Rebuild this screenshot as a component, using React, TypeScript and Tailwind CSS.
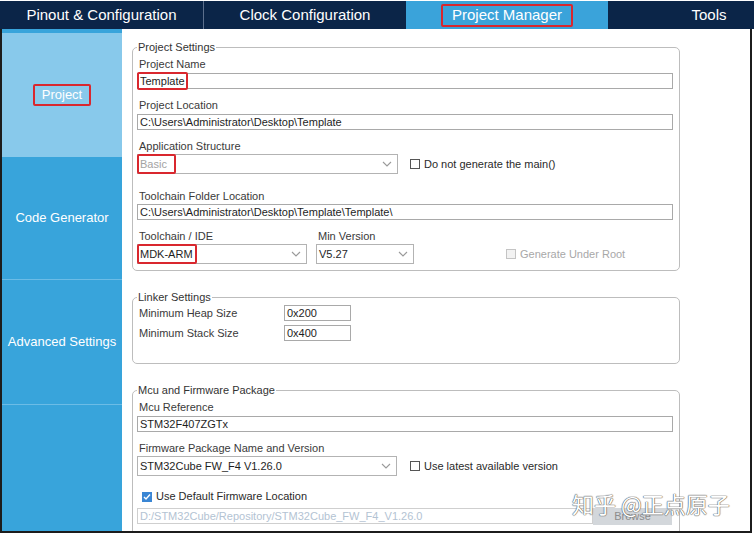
import type { ReactNode } from 'react'
import clsx from 'clsx'

// STM32CubeMX - Project Manager / Project page

function Chevron() {
  return (
    <svg width="10" height="6" viewBox="0 0 10 6" className="ml-auto mr-[5px] shrink-0">
      <polyline points="1,1 5,5 9,1" fill="none" stroke="#9a9a9a" strokeWidth="1.1" />
    </svg>
  )
}

function Label({ children, className }: { children: ReactNode; className?: string }) {
  return (
    <div className={clsx('h-[13px] pl-[2px] text-[11px] leading-[13px] text-[#3a3a3a]', className)}>
      {children}
    </div>
  )
}

function TextBox({ value, className, disabled }: { value: string; className?: string; disabled?: boolean }) {
  return (
    <div
      className={clsx(
        'relative h-[16px] border bg-white pl-[2px] text-[11px] leading-[14px] whitespace-nowrap',
        disabled ? 'border-[#cfcfcf] text-[#b3c3d3]' : 'border-[#a9a9a9] text-[#1e1e1e]',
        className
      )}
    >
      {value}
    </div>
  )
}

function Select({ value, className, muted, mark }: { value: string; className?: string; muted?: boolean; mark?: number }) {
  return (
    <div
      className={clsx(
        'relative flex h-[20px] items-center border border-[#b3b3b3] bg-white pl-[2px] text-[11px]',
        muted ? 'text-[#a3a3a3]' : 'text-[#1e1e1e]',
        className
      )}
    >
      <span>{value}</span>
      <Chevron />
      {mark && (
        <span
          className="absolute -left-px -top-px h-[20px] rounded-[2px] border-2 border-[#d9272e]"
          style={{ width: mark }}
        />
      )}
    </div>
  )
}

function CheckBox({ label, checked, disabled, className }: { label: string; checked?: boolean; disabled?: boolean; className?: string }) {
  return (
    <div className={clsx('flex items-center gap-[4px] text-[11px] leading-[13px]', className)}>
      <span
        className={clsx(
          'flex h-[10px] w-[10px] items-center justify-center border',
          checked ? 'border-[#3a86d4] bg-[#3a86d4]' : disabled ? 'border-[#c4c4c4] bg-[#f2f2f2]' : 'border-[#555] bg-white'
        )}
      >
        {checked && (
          <svg width="8" height="8" viewBox="0 0 8 8">
            <polyline points="1,4 3,6 7,1.5" fill="none" stroke="#fff" strokeWidth="1.4" />
          </svg>
        )}
      </span>
      <span className={disabled ? 'text-[#a8a8a8]' : 'text-[#2a2a2a]'}>{label}</span>
    </div>
  )
}

function Group({ title, children, className }: { title: string; children: ReactNode; className?: string }) {
  return (
    <fieldset className={clsx('w-[548px] rounded-[5px] border border-[#bdbdbd] pl-[4px] pr-[6px]', className)}>
      <legend className="px-[1px] text-[11px] leading-[13px] text-[#333]">{title}</legend>
      {children}
    </fieldset>
  )
}

const tabs = [
  { name: 'Pinout & Configuration', w: 'w-[204px]' },
  { name: 'Clock Configuration', w: 'w-[202px]' },
  { name: 'Project Manager', w: 'w-[202px]', active: true },
  { name: 'Tools', w: 'w-[202px]' },
]

export default function App() {
  return (
    <div className="h-[535px] w-[754px] overflow-hidden bg-white pt-[1px] font-['Liberation_Sans',Arial,sans-serif]">
      {/* Top tabs */}
      <div className="flex h-[28px] overflow-hidden bg-[#0b2548] text-[15px] text-white">
        {tabs.map((t, i) => (
          <div
            key={t.name}
            className={clsx(
              'flex shrink-0 items-center justify-center',
              t.w,
              t.active && 'bg-[#3aa3da]',
              i === 0 && 'border-r border-[#5c6f8c]'
            )}
          >
            {t.active ? (
              <span className="flex h-[23px] items-center rounded-[2px] border-2 border-[#d9272e] px-[9px]">{t.name}</span>
            ) : (
              t.name
            )}
          </div>
        ))}
      </div>

      <div className="flex h-[504px] w-[752px] border-b-2 border-l-2 border-r-2 border-[#1c1c1c]">
        {/* Sidebar */}
        <div className="flex w-[120px] shrink-0 flex-col bg-[#38a4db] text-[13px] text-white">
          <div className="h-[4px]" />
          <div className="flex h-[124px] items-center justify-center bg-[#88c9eb]">
            <span className="rounded-[2px] border-2 border-[#d9272e] px-[7px] py-[2px] leading-[14px]">Project</span>
          </div>
          <div className="flex h-[123px] items-center justify-center border-b border-[#6cbce6]">Code Generator</div>
          <div className="flex h-[125px] items-center justify-center border-b border-[#6cbce6]">Advanced Settings</div>
          <div className="flex-1" />
        </div>

        {/* Main */}
        <div className="flex-1 overflow-hidden bg-white pl-[10px]">
          <Group title="Project Settings" className="mt-[12px] pb-[6px]">
            <Label className="mt-[4px]">Project Name</Label>
            <div className="relative mt-[2px]">
              <TextBox value="Template" />
              <span className="absolute -top-px left-0 h-[18px] w-[51px] rounded-[2px] border-2 border-[#d9272e]" />
            </div>
            <Label className="mt-[10px]">Project Location</Label>
            <TextBox className="mt-[2px]" value="C:\Users\Administrator\Desktop\Template" />
            <Label className="mt-[10px]">Application Structure</Label>
            <div className="mt-[1px] flex items-center">
              <Select className="w-[261px]" value="Basic" muted mark={39} />
              <CheckBox className="ml-[12px]" label="Do not generate the main()" />
            </div>
            <Label className="mt-[16px]">Toolchain Folder Location</Label>
            <TextBox className="mt-[1px]" value="C:\Users\Administrator\Desktop\Template\Template\" />
            <div className="mt-[10px] flex">
              <Label className="w-[179px]">Toolchain / IDE</Label>
              <Label>Min Version</Label>
            </div>
            <div className="mt-[1px] flex items-center">
              <Select className="w-[170px]" value="MDK-ARM" mark={60} />
              <Select className="ml-[9px] w-[98px]" value="V5.27" />
              <CheckBox className="ml-[92px]" label="Generate Under Root" disabled />
            </div>
          </Group>

          <Group title="Linker Settings" className="mt-[20px] pb-[22px]">
            <div className="mt-[1px] flex items-center">
              <Label className="w-[147px]">Minimum Heap Size</Label>
              <TextBox className="w-[67px]" value="0x200" />
            </div>
            <div className="mt-[4px] flex items-center">
              <Label className="w-[147px]">Minimum Stack Size</Label>
              <TextBox className="w-[67px]" value="0x400" />
            </div>
          </Group>

          <Group title="Mcu and Firmware Package" className="mt-[20px] pb-[20px]">
            <Label className="mt-[4px]">Mcu Reference</Label>
            <TextBox className="mt-[2px]" value="STM32F407ZGTx" />
            <Label className="mt-[10px]">Firmware Package Name and Version</Label>
            <div className="mt-[1px] flex items-center">
              <Select className="w-[260px]" value="STM32Cube FW_F4 V1.26.0" />
              <CheckBox className="ml-[13px]" label="Use latest available version" />
            </div>
            <CheckBox className="mt-[14px] pl-[5px]" label="Use Default Firmware Location" checked />
            <div className="mt-[5px] flex">
              <TextBox className="w-[456px]" value="D:/STM32Cube/Repository/STM32Cube_FW_F4_V1.26.0" disabled />
              <div className="flex h-[17px] w-[79px] items-center justify-center bg-[#d3d7db] text-[11px] text-[#8c8c8c]">
                Browse
              </div>
            </div>
          </Group>
        </div>
      </div>

      {/* Watermark */}
      <div className="pointer-events-none absolute left-[572px] top-[489px] text-[22px] leading-[28px] text-white [text-shadow:0_0_1px_#555,0_0_1px_#555,0_0_1px_#777] font-['Noto_Sans_CJK_SC',sans-serif]">
        知乎 @正点原子
      </div>
    </div>
  )
}
